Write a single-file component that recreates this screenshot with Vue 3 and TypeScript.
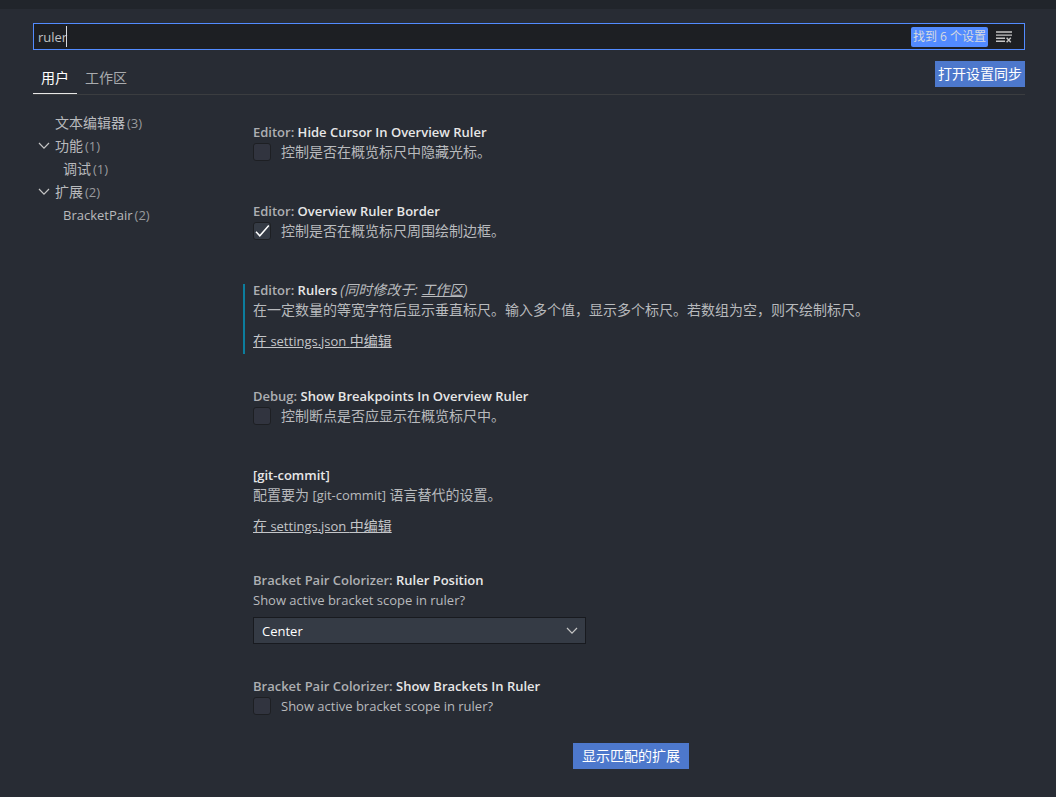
<script setup lang="ts">
import { ref } from 'vue'

interface TocEntry {
  label: string
  count: number
  level: number
  expandable: boolean
  latin?: boolean
}

interface TextPart {
  text: string
  latin?: boolean
}

interface Setting {
  id: string
  category: string
  name: string
  kind: 'check' | 'json' | 'select'
  description: TextPart[]
  checked?: boolean
  modified?: boolean
}

const query = ref('ruler')
const position = ref('Center')

const toc: TocEntry[] = [
  { label: '文本编辑器', count: 3, level: 1, expandable: false },
  { label: '功能', count: 1, level: 1, expandable: true },
  { label: '调试', count: 1, level: 2, expandable: false },
  { label: '扩展', count: 2, level: 1, expandable: true },
  { label: 'BracketPair', count: 2, level: 2, expandable: false, latin: true },
]

const settings = ref<Setting[]>([
  { id: 'hide-cursor', category: 'Editor:', name: 'Hide Cursor In Overview Ruler', kind: 'check', description: [{ text: '控制是否在概览标尺中隐藏光标。' }], checked: false },
  { id: 'ruler-border', category: 'Editor:', name: 'Overview Ruler Border', kind: 'check', description: [{ text: '控制是否在概览标尺周围绘制边框。' }], checked: true },
  { id: 'rulers', category: 'Editor:', name: 'Rulers', kind: 'json', description: [{ text: '在一定数量的等宽字符后显示垂直标尺。输入多个值，显示多个标尺。若数组为空，则不绘制标尺。' }], modified: true },
  { id: 'breakpoints', category: 'Debug:', name: 'Show Breakpoints In Overview Ruler', kind: 'check', description: [{ text: '控制断点是否应显示在概览标尺中。' }], checked: false },
  { id: 'git-commit', category: '', name: '[git-commit]', kind: 'json', description: [{ text: '配置要为' }, { text: ' [git-commit] ', latin: true }, { text: '语言替代的设置。' }] },
  { id: 'ruler-position', category: 'Bracket Pair Colorizer:', name: 'Ruler Position', kind: 'select', description: [{ text: 'Show active bracket scope in ruler?', latin: true }] },
  { id: 'show-brackets', category: 'Bracket Pair Colorizer:', name: 'Show Brackets In Ruler', kind: 'check', description: [{ text: 'Show active bracket scope in ruler?', latin: true }], checked: false },
])
</script>

<template>
  <div class="editor">
    <div class="strip"></div>
    <header class="header">
      <div class="search">
        <input v-model="query" class="search-input" type="text" aria-label="搜索设置" />
        <span class="caret"></span>
        <span class="badge">找到 6 个设置</span>
        <button class="clear" type="button" aria-label="清除搜索">
          <svg width="16" height="12" viewBox="0 0 16 12" fill="none" stroke="#c5c5c5" stroke-width="1.4">
            <path d="M0 1H16M0 4.1H16M0 7.2H9M0 10.3H9" />
            <path d="M10.6 6.8L14.8 11.2M14.8 6.8L10.6 11.2" />
          </svg>
        </button>
      </div>
      <div class="tabbar">
        <nav class="tabs">
          <button class="tab active" type="button">用户</button>
          <button class="tab" type="button">工作区</button>
        </nav>
        <button class="primary sync" type="button">打开设置同步</button>
      </div>
    </header>
    <div class="body">
      <nav class="toc">
        <a v-for="entry in toc" :key="entry.label" href="#" class="toc-row" :class="['level-' + entry.level]">
          <span class="twistie">
            <svg v-if="entry.expandable" width="12" height="8" viewBox="0 0 12 8" fill="none" stroke="#c5c5c5" stroke-width="1.2">
              <path d="M1 1L6 6.2L11 1" />
            </svg>
          </span>
          <span class="toc-label" :class="{ latin: entry.latin }">{{ entry.label }}</span>
          <span class="count">({{ entry.count }})</span>
        </a>
      </nav>
      <main class="settings">
        <section v-for="item in settings" :key="item.id" class="setting" :class="[item.kind, { modified: item.modified }]">
          <h2 class="title">
            <span v-if="item.category" class="category">{{ item.category }}&nbsp;</span><span>{{ item.name }}</span>
            <em v-if="item.modified" class="scope">(同时修改于: <a href="#">工作区</a>)</em>
          </h2>
          <div v-if="item.kind === 'check'" class="check-row">
            <span class="box">
              <input :id="item.id" v-model="item.checked" type="checkbox" />
              <svg v-if="item.checked" width="16" height="16" viewBox="0 0 16 16" fill="none" stroke="#fff" stroke-width="1.5">
                <path d="M2 8.7L5.8 12.8L14.8 2.6" />
              </svg>
            </span>
            <label class="desc" :for="item.id"><span v-for="part in item.description" :key="part.text" :class="{ latin: part.latin }">{{ part.text }}</span></label>
          </div>
          <template v-else-if="item.kind === 'json'">
            <p class="desc"><span v-for="part in item.description" :key="part.text" :class="{ latin: part.latin }">{{ part.text }}</span></p>
            <a class="json-link" href="#">在<span class="latin"> settings.json </span>中编辑</a>
          </template>
          <template v-else>
            <label class="desc" :for="item.id"><span v-for="part in item.description" :key="part.text" :class="{ latin: part.latin }">{{ part.text }}</span></label>
            <div class="select-wrap">
              <select :id="item.id" v-model="position">
                <option>Left</option>
                <option>Center</option>
                <option>Right</option>
              </select>
              <svg width="12" height="8" viewBox="0 0 12 8" fill="none" stroke="#c5c5c5" stroke-width="1.2">
                <path d="M1 1L6 6.2L11 1" />
              </svg>
            </div>
          </template>
        </section>
        <footer class="more">
          <button class="primary" type="button">显示匹配的扩展</button>
        </footer>
      </main>
    </div>
  </div>
</template>

<style>
body {
  background: #282c34;
}
</style>

<style scoped>
* {
  box-sizing: border-box;
}

.editor {
  min-height: 100vh;
  background: #282c34;
  color: #b8babd;
  font-family: "Open Sans", "Noto Sans", "Noto Sans CJK SC", sans-serif;
  font-size: 14px;
  line-height: 20px;
}

button,
input,
select {
  font: inherit;
  color: inherit;
  margin: 0;
}

.latin {
  font-size: 13px;
}

.strip {
  height: 9px;
  background: #21252b;
}

.header {
  padding: 14px 31px 0 33px;
}

.search {
  position: relative;
  display: flex;
  align-items: center;
  height: 27px;
  padding-right: 12px;
  background: #1d1f23;
  border: 1px solid #528bff;
}

.search-input {
  flex: 1;
  min-width: 0;
  height: 25px;
  padding: 0 4px;
  border: 0;
  outline: 0;
  background: transparent;
  color: #c0c2c5;
  font-size: 13px;
}

.caret {
  position: absolute;
  left: 32px;
  top: 2px;
  width: 1px;
  height: 21px;
  background: #d7dae0;
}

.badge {
  height: 20px;
  padding: 0 2px;
  border-radius: 2px;
  background: #528bff;
  color: #d7dae0;
  font-size: 12px;
  white-space: nowrap;
}

.clear {
  display: flex;
  margin-left: 8px;
  padding: 0;
  border: 0;
  background: transparent;
}

.tabbar {
  display: flex;
  justify-content: space-between;
  align-items: flex-start;
  height: 45px;
  padding-top: 11px;
  border-bottom: 1px solid #3b3d40;
}

.tabs {
  display: flex;
}

.tab {
  height: 33px;
  padding: 2px 8px 0;
  border: 0;
  border-bottom: 1px solid transparent;
  background: transparent;
  color: #a9abae;
}

.tab.active {
  border-bottom-color: #e7e7e7;
  color: #fff;
}

.primary {
  height: 26px;
  padding: 0 9px;
  border: 0;
  background: #4d78cc;
  color: #fff;
}

.sync {
  padding: 0 3px;
}

.body {
  display: flex;
  padding: 0 31px 0 33px;
}

.toc {
  flex: none;
  width: 204px;
  padding-top: 16px;
}

.toc-row {
  display: flex;
  align-items: center;
  height: 23px;
  color: #b8babd;
  text-decoration: none;
}

.twistie {
  display: flex;
  flex: none;
  width: 22px;
  padding-left: 5px;
}

.level-2 .twistie {
  width: 30px;
}

.count {
  margin-left: 2px;
  color: #989a9d;
  font-size: 13px;
}

.settings {
  flex: 1;
  min-width: 0;
  padding-top: 27px;
}

.setting {
  position: relative;
  padding: 0 16px 39px;
}

.setting.json {
  padding-bottom: 34px;
}

.setting.select {
  padding-bottom: 32px;
}

.setting.modified {
  padding-bottom: 35px;
}

.setting:nth-last-child(2) {
  padding-bottom: 27px;
}

.modified::before {
  content: "";
  position: absolute;
  left: 6px;
  top: 4px;
  bottom: 32px;
  width: 2px;
  background: #0c7d9d;
}

.title {
  margin: 0;
  color: #e7e7e7;
  font-size: 13px;
  font-weight: 600;
  line-height: 20px;
}

.category {
  color: #adafb2;
}

.scope {
  margin-left: 3px;
  color: #b8babd;
  font-size: 14px;
  font-weight: 400;
}

.scope a {
  color: inherit;
}

.desc {
  display: block;
  margin: 0;
  line-height: 20px;
}

.check-row {
  display: flex;
  align-items: center;
  gap: 10px;
  height: 20px;
}

.box {
  position: relative;
  flex: none;
  width: 18px;
  height: 18px;
}

.box input {
  display: block;
  appearance: none;
  width: 18px;
  height: 18px;
  border: 1px solid #1d1f23;
  border-radius: 3px;
  background: #31343f;
}

.box input:checked {
  background: #353b45;
}

.box svg {
  position: absolute;
  left: 1px;
  top: 1px;
  pointer-events: none;
}

.json-link {
  display: inline-block;
  margin-top: 11px;
  color: #c4c6c9;
  text-decoration: underline;
  vertical-align: top;
}

.select-wrap {
  position: relative;
  width: 333px;
  max-width: 100%;
  margin-top: 7px;
}

.select-wrap select {
  display: block;
  appearance: none;
  width: 100%;
  height: 27px;
  padding: 0 8px;
  border: 1px solid #181a1f;
  border-radius: 0;
  background: #353b45;
  color: #fff;
  font-size: 13px;
}

.select-wrap svg {
  position: absolute;
  right: 8px;
  top: 10px;
  pointer-events: none;
}

.more {
  display: flex;
  justify-content: center;
  padding-bottom: 28px;
}
</style>
